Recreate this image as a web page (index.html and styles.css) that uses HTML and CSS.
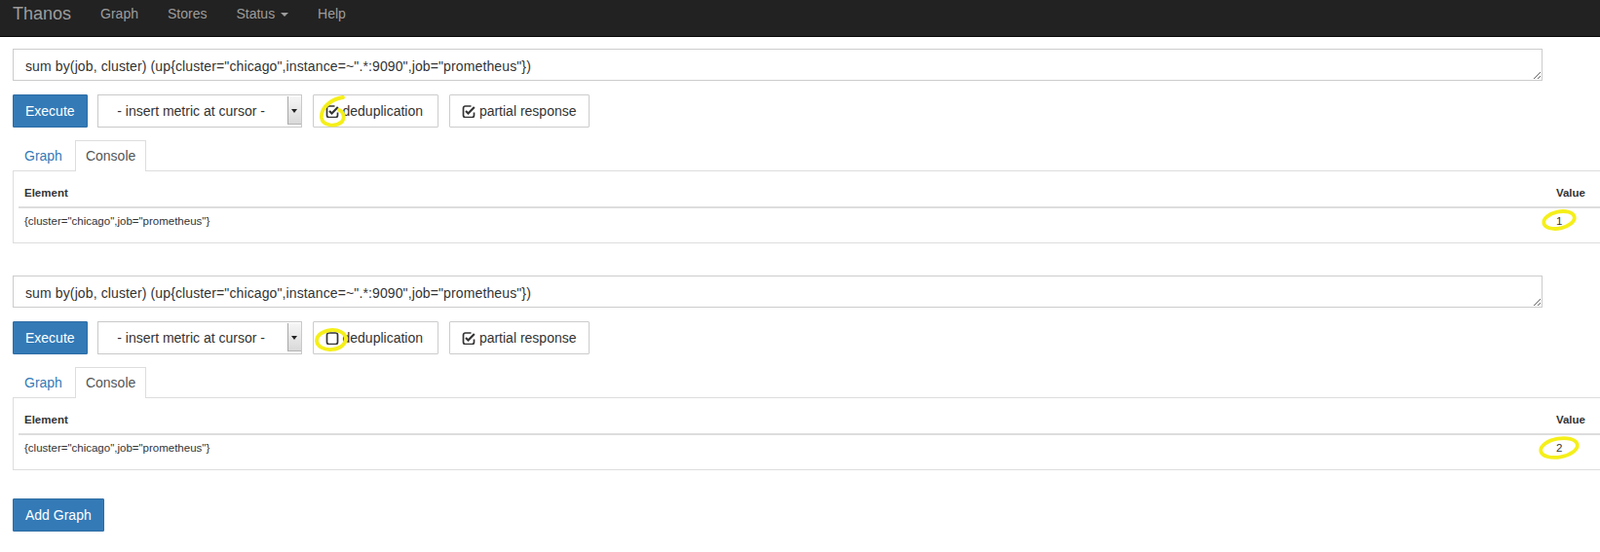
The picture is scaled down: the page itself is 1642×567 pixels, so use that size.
FILE: index.html
```html
<!doctype html>
<html>
<head>
<meta charset="utf-8">
<title>Thanos</title>
<link rel="stylesheet" href="styles.css">
</head>
<body>
<nav class="navbar">
	<a class="brand" href="#">Thanos</a>
	<ul class="nav">
		<li><a href="#">Graph</a></li>
		<li><a href="#">Stores</a></li>
		<li><a href="#">Status <span class="caret"></span></a></li>
		<li><a href="#">Help</a></li>
	</ul>
</nav>

<div class="content">

<div class="graph">
	<textarea class="expr" rows="1" spellcheck="false">sum by(job, cluster) (up{cluster="chicago",instance=~".*:9090",job="prometheus"})</textarea>
	<div class="controls">
		<button class="btn btn-primary">Execute</button>
		<div class="metric-select"><span class="label">- insert metric at cursor -</span><span class="arrow"></span></div>
		<button class="btn btn-default toggle">
			<svg class="icon" viewBox="0 0 14 14"><path class="box" d="M9.5 2H3.5A2 2 0 0 0 1.5 4v7.5a2 2 0 0 0 2 2h7a2 2 0 0 0 2-2V8.5"/><path class="tick" d="M4 7l2.5 2.5L12.8 3"/></svg> deduplication
			<svg class="mark mark-six" viewBox="0 0 40 36"><path d="M32 2C19 4 9 13 10 23C11 31 24 33 31 27C34 23 33 17 28 15"/></svg>
		</button>
		<button class="btn btn-default">
			<svg class="icon" viewBox="0 0 14 14"><path class="box" d="M9.5 2H3.5A2 2 0 0 0 1.5 4v7.5a2 2 0 0 0 2 2h7a2 2 0 0 0 2-2V8.5"/><path class="tick" d="M4 7l2.5 2.5L12.8 3"/></svg> partial response
		</button>
	</div>
	<ul class="tabs">
		<li><a href="#">Graph</a></li>
		<li class="active"><a href="#">Console</a></li>
	</ul>
	<div class="tab-panel">
		<table class="console">
			<thead><tr><th>Element</th><th class="val">Value</th></tr></thead>
			<tbody><tr><td>{cluster="chicago",job="prometheus"}</td><td class="val"><span class="num">1<svg class="mark mark-ring" viewBox="0 0 40 26"><ellipse cx="20" cy="13" rx="16" ry="8.5" transform="rotate(-12 20 13)"/></svg></span></td></tr></tbody>
		</table>
	</div>
</div>

<div class="graph">
	<textarea class="expr" rows="1" spellcheck="false">sum by(job, cluster) (up{cluster="chicago",instance=~".*:9090",job="prometheus"})</textarea>
	<div class="controls">
		<button class="btn btn-primary">Execute</button>
		<div class="metric-select"><span class="label">- insert metric at cursor -</span><span class="arrow"></span></div>
		<button class="btn btn-default toggle">
			<svg class="icon" viewBox="0 0 14 14"><path class="box" d="M3.5 2h7a2 2 0 0 1 2 2v7.5a2 2 0 0 1-2 2h-7a2 2 0 0 1-2-2V4a2 2 0 0 1 2-2z"/></svg> deduplication
			<svg class="mark mark-oval" viewBox="0 0 40 30"><ellipse cx="19" cy="15" rx="15" ry="10" transform="rotate(-6 19 15)"/></svg>
		</button>
		<button class="btn btn-default">
			<svg class="icon" viewBox="0 0 14 14"><path class="box" d="M9.5 2H3.5A2 2 0 0 0 1.5 4v7.5a2 2 0 0 0 2 2h7a2 2 0 0 0 2-2V8.5"/><path class="tick" d="M4 7l2.5 2.5L12.8 3"/></svg> partial response
		</button>
	</div>
	<ul class="tabs">
		<li><a href="#">Graph</a></li>
		<li class="active"><a href="#">Console</a></li>
	</ul>
	<div class="tab-panel">
		<table class="console">
			<thead><tr><th>Element</th><th class="val">Value</th></tr></thead>
			<tbody><tr><td>{cluster="chicago",job="prometheus"}</td><td class="val"><span class="num">2<svg class="mark mark-ring wide" viewBox="0 0 46 28"><ellipse cx="23" cy="14" rx="19" ry="9.5" transform="rotate(-10 23 14)"/></svg></span></td></tr></tbody>
		</table>
	</div>
</div>

<button class="btn btn-primary add">Add Graph</button>

</div>
</body>
</html>
```

FILE: styles.css
```css
html, body{
	margin:0px;
	padding:0px;
	overflow:hidden;
}
body{
	font-family:"Liberation Sans", Arial, sans-serif;
	font-size:14px;
	color:#333;
	background:#fff;
}
a{
	text-decoration:none;
}

.navbar{
	display:flex;
	align-items:flex-start;
	height:38px;
	padding:4px 0 0 13px;
	box-sizing:border-box;
	background:#222;
	border-bottom:1px solid #080808;
}
.brand{
	font-size:18px;
	line-height:20px;
	color:#9d9d9d;
	margin-right:15px;
}
.nav{
	display:flex;
	list-style:none;
	margin:0;
	padding:0;
}
.nav a{
	display:block;
	padding:0 15px;
	line-height:20px;
	color:#9d9d9d;
}
.caret{
	display:inline-block;
	width:0;
	height:0;
	margin-left:2px;
	vertical-align:middle;
	border-top:4px solid #9d9d9d;
	border-left:4px solid transparent;
	border-right:4px solid transparent;
}

.content{
	padding:12px 0 0 13px;
}
.graph{
	width:1650px;
	margin-bottom:33px;
}

.expr{
	display:block;
	width:1570px;
	height:33px;
	box-sizing:border-box;
	margin:0;
	padding:7px 12px 4px;
	border:1px solid #ccc;
	font-family:"Liberation Sans", Arial, sans-serif;
	font-size:14px;
	line-height:20px;
	letter-spacing:0.12px;
	color:#333;
	overflow:hidden;
}

.controls{
	display:flex;
	align-items:flex-start;
	margin-top:14px;
}
.btn{
	display:inline-block;
	height:34px;
	box-sizing:border-box;
	padding:6px 12px;
	font-family:"Liberation Sans", Arial, sans-serif;
	font-size:14px;
	line-height:20px;
	border:1px solid transparent;
	border-radius:1px;
	white-space:nowrap;
	cursor:pointer;
}
.btn-primary{
	background:#337ab7;
	border-color:#2e6da4;
	color:#fff;
}
.btn-default{
	background:#fff;
	border-color:#ccc;
	color:#333;
	margin-right:11px;
	position:relative;
}
.controls .btn-primary{
	margin-right:10px;
}
.toggle{
	padding-right:15px;
}

.icon{
	width:14px;
	height:14px;
	vertical-align:-2px;
	fill:none;
	stroke:#333;
}
.icon .box{
	stroke-width:1.7;
}
.icon .tick{
	stroke-width:2.2;
	stroke-linecap:butt;
}

.metric-select{
	display:flex;
	width:210px;
	height:34px;
	box-sizing:border-box;
	margin-right:11px;
	border:1px solid #c9c9c9;
	background:#fff;
}
.metric-select .label{
	flex:1;
	text-align:center;
	line-height:32px;
	padding-right:3px;
	color:#333;
}
.metric-select .arrow{
	position:relative;
	width:13px;
	margin:1px 0 2px;
	background:linear-gradient(#f6f6f6, #d9d9d9);
	border-left:1px solid #a9a9a9;
	border-bottom:1px solid #b5b5b5;
}
.metric-select .arrow:after{
	content:"";
	position:absolute;
	left:3px;
	top:13px;
	border-top:4px solid #222;
	border-left:3px solid transparent;
	border-right:3px solid transparent;
}

.mark{
	position:absolute;
	fill:none;
	stroke:#f5ef1a;
	stroke-width:3.8;
	stroke-linecap:round;
}
.mark-six{
	left:-2px;
	top:0px;
	width:40px;
	height:36px;
}
.mark-oval{
	left:-1px;
	top:3px;
	width:40px;
	height:30px;
}

.tabs{
	display:flex;
	list-style:none;
	margin:13px 0 0;
	padding:0 0 0 1px;
	border-bottom:1px solid #ddd;
}
.tabs li{
	margin-right:2px;
	margin-bottom:-1px;
}
.tabs a{
	display:block;
	padding:6px 10px;
	line-height:18px;
	border:1px solid transparent;
	border-bottom:none;
	color:#337ab7;
}
.tabs .active a{
	background:#fff;
	border-color:#ddd;
	color:#555;
	padding-bottom:7px;
}

.tab-panel{
	border:1px solid #ddd;
	border-top:none;
	padding:5px 5px 5px;
}
.console{
	width:100%;
	border-collapse:collapse;
	font-size:11.5px;
	line-height:15px;
}
.console th{
	text-align:left;
	padding:10px 5px 6px 6px;
	border-bottom:2px solid #ddd;
	color:#333;
}
.console td{
	padding:6px 5px 9px 6px;
	color:#333;
}
.console .val{
	width:1px;
	white-space:nowrap;
	padding-right:30px;
}
.num{
	position:relative;
}
.mark-ring{
	left:-17px;
	top:-8px;
	width:40px;
	height:26px;
}
.mark-ring.wide{
	left:-20px;
	top:-8px;
	width:46px;
	height:28px;
}

.add{
	margin-top:-4px;
}
```
